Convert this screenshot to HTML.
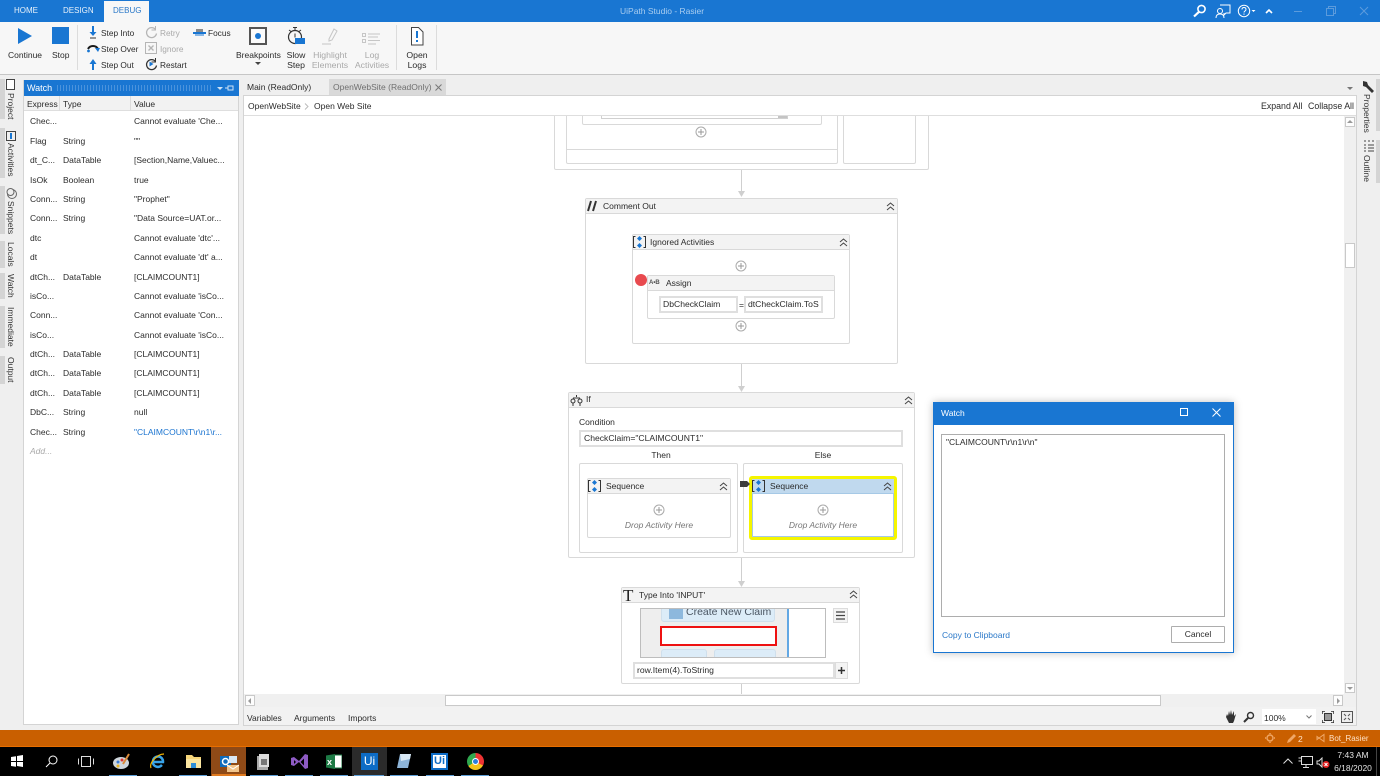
<!DOCTYPE html>
<html><head><meta charset="utf-8"><title>UiPath Studio - Rasier</title>
<style>
html,body{margin:0;padding:0}
body{width:1380px;height:776px;overflow:hidden;position:relative;background:#efefef;font-family:"Liberation Sans",sans-serif;font-size:8.5px;color:#2b2b2b;filter:blur(.3px)}
div,span,svg{position:absolute;box-sizing:border-box}
.t{white-space:nowrap;line-height:12px;height:12px}
.c{white-space:nowrap;line-height:10px;text-align:center}
.g{color:#a9a9a9}
.b{background:#fff;border:1px solid #d9d9d9;border-radius:2px}
.h{background:#f3f3f3;border-bottom:1px solid #d9d9d9;left:0;right:0;top:0}
.in{background:#fff;border:2px solid #dfdfdf;line-height:12px;padding-left:2px;white-space:nowrap;overflow:hidden;font-size:8.6px}
.v{writing-mode:vertical-rl;white-space:nowrap;line-height:12px;color:#333}
.strip{background:#d4d4d4}
.line{background:#cfcfcf;width:1px}
.r{font-size:8.3px}
</style></head><body>

<!-- title bar -->
<div style="left:0;top:0;width:1380px;height:22px;background:#1976d2"></div>
<div style="left:104px;top:1px;width:45px;height:22px;background:#f7f7f7"></div>
<div class="t" style="left:14px;top:5px;color:#e8f1fa;font-size:8px">HOME</div>
<div class="t" style="left:63px;top:5px;color:#e8f1fa;font-size:8px">DESIGN</div>
<div class="t" style="left:113px;top:5px;color:#2a78c8;font-size:8px">DEBUG</div>
<div class="t" style="left:620px;top:5px;color:#a9cdf0;font-size:8.5px">UiPath Studio - Rasier</div>
<svg style="left:1192px;top:3px" width="16" height="16" viewBox="0 0 16 16" fill="none" stroke="#fff" stroke-width="1.6"><circle cx="9.5" cy="6" r="3.6"/><path d="M7 8.8 2 13.5" stroke-width="2.2"/></svg>
<svg style="left:1215px;top:3px" width="16" height="16" viewBox="0 0 16 16" fill="none" stroke="#fff" stroke-width="1"><path d="M5 2h10v8h-4l-2 2v-2"/><circle cx="5" cy="8" r="2.5"/><path d="M1 15c0-3 2-4 4-4s4 1 4 4"/></svg>
<svg style="left:1236px;top:3px" width="22" height="16" viewBox="0 0 22 16" fill="none" stroke="#fff"><circle cx="8" cy="8" r="5.7"/><path d="M6 6.5c0-2.6 4-2.6 4 0 0 1.5-2 1.5-2 3M8 10.5v1.3"/><path d="M15.500 7h4l-2 2z" fill="#fff" stroke="none"/></svg>
<svg style="left:1264px;top:7px" width="10" height="8" viewBox="0 0 10 8" fill="none" stroke="#fff" stroke-width="1.6"><path d="M2 6l3-3 3 3"/></svg>
<div style="left:1294px;top:11px;width:8px;height:1px;background:#5c9bdc"></div>
<svg style="left:1326px;top:6px" width="10" height="10" viewBox="0 0 10 10" fill="none" stroke="#5c9bdc"><rect x=".5" y="2.500" width="7" height="7"/><path d="M2.500 2.500v-2h7v7h-2"/></svg>
<svg style="left:1359px;top:6px" width="10" height="10" viewBox="0 0 10 10" stroke="#5c9bdc"><path d="M1 1l8 8M9 1l-8 8"/></svg>

<!-- ribbon -->
<div style="left:0;top:22px;width:1380px;height:53px;background:#f7f7f7;border-bottom:1px solid #c6c6c6"></div>
<svg style="left:17px;top:27px" width="16" height="18"><path d="M1 1 15 9 1 17z" fill="#1976d2"/></svg>
<div style="left:52px;top:27px;width:17px;height:17px;background:#1976d2"></div>
<div class="t" style="left:8px;top:49px;font-size:8.5px">Continue</div>
<div class="t" style="left:52px;top:49px;font-size:8.5px">Stop</div>
<div style="left:77px;top:25px;width:1px;height:45px;background:#dcdcdc"></div>
<svg style="left:88px;top:26px" width="10" height="13"><path d="M5 0v8" stroke="#1976d2" stroke-width="2"/><path d="M1.500 6h7L5 10z" fill="#1976d2"/><path d="M2 12h6" stroke="#333"/></svg>
<svg style="left:86px;top:43px" width="14" height="10" fill="none"><path d="M2 6c2-4 8-4 10 0" stroke="#1a1a1a" stroke-width="2"/><path d="M9 5h5l-2 4z" fill="#1976d2"/><circle cx="2.500" cy="8" r="1.400" fill="#1976d2"/></svg>
<svg style="left:88px;top:58px" width="10" height="13"><path d="M5 4v8" stroke="#1976d2" stroke-width="2"/><path d="M1.500 6h7L5 1z" fill="#1976d2"/></svg>
<div class="t r" style="left:101px;top:27px">Step Into</div>
<div class="t r" style="left:101px;top:43px">Step Over</div>
<div class="t r" style="left:101px;top:59px">Step Out</div>
<svg style="left:145px;top:26px" width="13" height="13" fill="none" stroke="#b5b5b5" stroke-width="1.300"><path d="M10.500 3.500a5 5 0 1 0 1 4"/><path d="M10.500 0v4h-4" stroke-width="1"/></svg>
<svg style="left:145px;top:42px" width="13" height="13" fill="none" stroke="#b5b5b5"><rect x=".5" y=".5" width="11" height="11"/><path d="M3.500 3.500l5 5M8.500 3.500l-5 5" stroke-width="1.400"/></svg>
<svg style="left:145px;top:58px" width="13" height="13" fill="none" stroke="#333" stroke-width="1.300"><path d="M10.500 3.500a5 5 0 1 0 1 4"/><path d="M10.500 0v4h-4" stroke-width="1"/><path d="M4.500 3.500l4 2.500-4 2.500z" fill="#1976d2" stroke="none"/></svg>
<div class="t g r" style="left:160px;top:27px">Retry</div>
<div class="t g r" style="left:160px;top:43px">Ignore</div>
<div class="t r" style="left:160px;top:59px">Restart</div>
<svg style="left:193px;top:29px" width="13" height="7"><path d="M3 0h7v4H3z" fill="#8a8a8a"/><path d="M0 3h13v2H0z" fill="#1976d2"/><path d="M2 6h9" stroke="#1976d2"/></svg>
<div class="t r" style="left:208px;top:27px">Focus</div>
<div style="left:249px;top:27px;width:18px;height:18px;border:2px solid #555;background:#fbfbfb"></div>
<div style="left:255px;top:33px;width:6px;height:6px;border-radius:50%;background:#1976d2"></div>
<div class="t" style="left:236px;top:49px;font-size:8.5px">Breakpoints</div>
<svg style="left:255px;top:62px" width="6" height="4"><path d="M0 0h6L3 3z" fill="#444"/></svg>
<svg style="left:286px;top:26px" width="20" height="20" fill="none" stroke="#333"><circle cx="9" cy="11" r="6.500" stroke-width="1.200"/><path d="M7 1.500h4M9 1.500v3M3 4l2 1.500M15 4l-2 1.500M9 7.500v4" /><rect x="9" y="12" width="10" height="6" fill="#1976d2" stroke="none"/></svg>
<div class="c" style="left:280px;top:50px;width:32px;font-size:8.7px">Slow<br>Step</div>
<svg style="left:320px;top:27px" width="20" height="20" fill="none" stroke="#c6c6c6"><path d="M9 12 14 2l3 2-5 9-3 1zM2 17h9"/></svg>
<div class="c g" style="left:310px;top:50px;width:40px;font-size:8.7px">Highlight<br>Elements</div>
<svg style="left:362px;top:33px" width="20" height="14" fill="none" stroke="#c6c6c6"><rect x=".5" y=".5" width="3" height="3"/><rect x=".5" y="6.500" width="3" height="3"/><path d="M6 1h12M6 4h10M6 7.500h12M6 11h8"/></svg>
<div class="c g" style="left:352px;top:50px;width:40px;font-size:8.7px">Log<br>Activities</div>
<div style="left:396px;top:25px;width:1px;height:45px;background:#dcdcdc"></div>
<div style="left:436px;top:25px;width:1px;height:45px;background:#dcdcdc"></div>
<svg style="left:409px;top:27px" width="16" height="19" fill="#fff" stroke="#444"><path d="M2.500.5h7l4.500 4.500v13H2.500z"/><path d="M8 4v7M8 13v2" stroke="#1976d2" stroke-width="2"/></svg>
<div class="c" style="left:402px;top:50px;width:30px;font-size:8.7px">Open<br>Logs</div>

<!-- left rail -->
<div class="strip" style="left:0;top:79px;width:5px;height:40px"></div>
<div class="strip" style="left:0;top:128px;width:5px;height:50px"></div>
<div class="strip" style="left:0;top:186px;width:5px;height:48px"></div>
<div class="strip" style="left:0;top:241px;width:5px;height:27px"></div>
<div class="strip" style="left:0;top:273px;width:5px;height:26px"></div>
<div class="strip" style="left:0;top:306px;width:5px;height:42px"></div>
<div class="strip" style="left:0;top:356px;width:5px;height:28px"></div>
<svg style="left:6px;top:79px" width="10" height="12" fill="#fff" stroke="#444"><rect x=".5" y=".5" width="8" height="10"/></svg>
<div class="v" style="left:5px;top:93px;width:12px">Project</div>
<svg style="left:6px;top:129px" width="11" height="13" fill="none" stroke="#444"><rect x=".5" y="2.500" width="9" height="9"/><path d="M5 4v6" stroke="#1976d2" stroke-width="2"/></svg>
<div class="v" style="left:5px;top:143px;width:12px">Activities</div>
<svg style="left:6px;top:187px" width="12" height="13" fill="#eee" stroke="#666"><circle cx="6" cy="7" r="4.500"/><circle cx="4.500" cy="5" r="3.500"/></svg>
<div class="v" style="left:5px;top:201px;width:12px">Snippets</div>
<div class="v" style="left:5px;top:242px;width:12px">Locals</div>
<div class="v" style="left:5px;top:274px;width:12px">Watch</div>
<div class="v" style="left:5px;top:307px;width:12px">Immediate</div>
<div class="v" style="left:5px;top:357px;width:12px">Output</div>

<!-- watch panel -->
<div style="left:23px;top:80px;width:216px;height:645px;background:#fff;border:1px solid #d4d4d4"></div>
<div style="left:24px;top:80px;width:215px;height:16px;background:#1976d2"></div>
<div style="left:57px;top:85px;width:155px;height:6px;background:repeating-linear-gradient(90deg,#4b93dc 0 1px,#1976d2 1px 3px)"></div>
<div class="t" style="left:27px;top:82px;color:#fff;font-size:9px">Watch</div>
<svg style="left:216px;top:85px" width="20" height="7"><path d="M1 2h6L4 5z" fill="#cfe2f5"/><path d="M12 1h5v4h-5zM9 3h3" fill="none" stroke="#cfe2f5"/></svg>
<div style="left:24px;top:96px;width:214px;height:15px;background:#f2f2f2;border-bottom:1px solid #dedede"></div>
<div style="left:59px;top:96px;width:1px;height:15px;background:#dcdcdc"></div>
<div style="left:130px;top:96px;width:1px;height:15px;background:#dcdcdc"></div>
<div class="t" style="left:27px;top:98px">Express</div>
<div class="t" style="left:63px;top:98px">Type</div>
<div class="t" style="left:134px;top:98px">Value</div>
<div class="t" style="left:30px;top:115px">Chec...</div><div class="t" style="left:134px;top:115px">Cannot evaluate 'Che...</div>
<div class="t" style="left:30px;top:135px">Flag</div><div class="t" style="left:63px;top:135px">String</div><div class="t" style="left:134px;top:135px">""</div>
<div class="t" style="left:30px;top:154px">dt_C...</div><div class="t" style="left:63px;top:154px">DataTable</div><div class="t" style="left:134px;top:154px">[Section,Name,Valuec...</div>
<div class="t" style="left:30px;top:174px">IsOk</div><div class="t" style="left:63px;top:174px">Boolean</div><div class="t" style="left:134px;top:174px">true</div>
<div class="t" style="left:30px;top:193px">Conn...</div><div class="t" style="left:63px;top:193px">String</div><div class="t" style="left:134px;top:193px">"Prophet"</div>
<div class="t" style="left:30px;top:212px">Conn...</div><div class="t" style="left:63px;top:212px">String</div><div class="t" style="left:134px;top:212px">"Data Source=UAT.or...</div>
<div class="t" style="left:30px;top:232px">dtc</div><div class="t" style="left:134px;top:232px">Cannot evaluate 'dtc'...</div>
<div class="t" style="left:30px;top:251px">dt</div><div class="t" style="left:134px;top:251px">Cannot evaluate 'dt' a...</div>
<div class="t" style="left:30px;top:271px">dtCh...</div><div class="t" style="left:63px;top:271px">DataTable</div><div class="t" style="left:134px;top:271px">[CLAIMCOUNT1]</div>
<div class="t" style="left:30px;top:290px">isCo...</div><div class="t" style="left:134px;top:290px">Cannot evaluate 'isCo...</div>
<div class="t" style="left:30px;top:309px">Conn...</div><div class="t" style="left:134px;top:309px">Cannot evaluate 'Con...</div>
<div class="t" style="left:30px;top:329px">isCo...</div><div class="t" style="left:134px;top:329px">Cannot evaluate 'isCo...</div>
<div class="t" style="left:30px;top:348px">dtCh...</div><div class="t" style="left:63px;top:348px">DataTable</div><div class="t" style="left:134px;top:348px">[CLAIMCOUNT1]</div>
<div class="t" style="left:30px;top:367px">dtCh...</div><div class="t" style="left:63px;top:367px">DataTable</div><div class="t" style="left:134px;top:367px">[CLAIMCOUNT1]</div>
<div class="t" style="left:30px;top:387px">dtCh...</div><div class="t" style="left:63px;top:387px">DataTable</div><div class="t" style="left:134px;top:387px">[CLAIMCOUNT1]</div>
<div class="t" style="left:30px;top:406px">DbC...</div><div class="t" style="left:63px;top:406px">String</div><div class="t" style="left:134px;top:406px">null</div>
<div class="t" style="left:30px;top:426px">Chec...</div><div class="t" style="left:63px;top:426px">String</div><div class="t" style="left:134px;top:426px;color:#1b74d0">"CLAIMCOUNT\r\n1\r...</div>
<div class="t g" style="left:30px;top:445px;font-style:italic">Add...</div>

<!-- document tabs -->
<div class="t" style="left:247px;top:81px">Main (ReadOnly)</div>
<div style="left:329px;top:79px;width:117px;height:16px;background:#d9d9d9"></div>
<div class="t" style="left:333px;top:81px;color:#6f6f6f">OpenWebSite (ReadOnly)</div>
<svg style="left:435px;top:84px" width="7" height="7" stroke="#777"><path d="M.5.5l6 6M6.500.5l-6 6"/></svg>
<svg style="left:1347px;top:87px" width="6" height="4"><path d="M0 0h6L3 3z" fill="#777"/></svg>

<!-- designer -->
<div style="left:243px;top:95px;width:1114px;height:631px;background:#fff;border:1px solid #d4d4d4;border-top:2px solid #d4d4d4"></div>

<!-- scrollbars -->
<div style="left:1344px;top:116px;width:12px;height:578px;background:#f0f0f0"></div>
<div style="left:1345px;top:117px;width:10px;height:10px;background:#fdfdfd;border:1px solid #c9c9c9"></div>
<svg style="left:1347px;top:120px" width="6" height="4"><path d="M3 0l3 3H0z" fill="#999"/></svg>
<div style="left:1345px;top:243px;width:10px;height:25px;background:#fff;border:1px solid #c9c9c9"></div>
<div style="left:1345px;top:683px;width:10px;height:10px;background:#fdfdfd;border:1px solid #c9c9c9"></div>
<svg style="left:1347px;top:687px" width="6" height="4"><path d="M0 0h6L3 3z" fill="#999"/></svg>
<div style="left:244px;top:694px;width:1112px;height:13px;background:#f0f0f0"></div>
<div style="left:245px;top:695px;width:10px;height:11px;background:#fdfdfd;border:1px solid #c9c9c9"></div>
<svg style="left:248px;top:698px" width="4" height="6"><path d="M0 3l3-3v6z" fill="#999"/></svg>
<div style="left:445px;top:695px;width:716px;height:11px;background:#fff;border:1px solid #c9c9c9"></div>
<div style="left:1333px;top:695px;width:10px;height:11px;background:#fdfdfd;border:1px solid #c9c9c9"></div>
<svg style="left:1337px;top:698px" width="4" height="6"><path d="M3 3L0 0v6z" fill="#999"/></svg>
<div style="left:244px;top:707px;width:1112px;height:18px;background:#f2f2f2"></div>
<div class="t" style="left:247px;top:712px">Variables</div>
<div class="t" style="left:294px;top:712px">Arguments</div>
<div class="t" style="left:348px;top:712px">Imports</div>
<svg style="left:1224px;top:710px" width="14" height="14"><path d="M2 7l1-3 1 2 1-5 1 4 1-5 1 5 2-4v5l2-2-2 7-1 2H5z" fill="#333"/></svg>
<svg style="left:1243px;top:711px" width="12" height="12" fill="none" stroke="#333" stroke-width="1.400"><circle cx="7.500" cy="4.500" r="3"/><path d="M5 7l-4 4" stroke-width="2"/></svg>
<div style="left:1262px;top:709px;width:54px;height:15px;background:#fff"></div>
<div class="t" style="left:1264px;top:712px">100%</div>
<svg style="left:1306px;top:715px" width="6" height="4" fill="none" stroke="#777"><path d="M.5.5l2.500 2.500L5.500.5"/></svg>
<svg style="left:1322px;top:711px" width="12" height="12" fill="none" stroke="#333"><rect x="2.500" y="2.500" width="7" height="7" fill="#999"/><path d="M0 3V0h3M9 0h3v3M12 9v3H9M3 12H0V9" stroke-width="1.500"/></svg>
<svg style="left:1341px;top:711px" width="12" height="12" fill="#eee" stroke="#555"><rect x=".5" y=".5" width="11" height="11"/><path d="M3 3l2 2M9 3L7 5M3 9l2-2M9 9L7 7"/></svg>

<!-- right rail -->
<div class="strip" style="left:1376px;top:79px;width:4px;height:52px"></div>
<div class="strip" style="left:1376px;top:140px;width:4px;height:43px"></div>
<svg style="left:1362px;top:79px" width="14" height="14"><path d="M1 2l4 1 1 3 6 6-2 2-6-6-3-1z" fill="#333"/></svg>
<div class="v" style="left:1361px;top:94px;width:12px">Properties</div>
<svg style="left:1363px;top:140px" width="11" height="13" stroke="#444"><path d="M1 1h2M5 1h2M9 1h2M1 5h2M5 5h6M1 8h2M5 8h6M1 11h2M5 11h6"/></svg>
<div class="v" style="left:1361px;top:155px;width:12px">Outline</div>

<!-- flow: top block -->
<div class="b" style="left:554px;top:104px;width:375px;height:66px;border-top:none"></div>
<div class="b" style="left:566px;top:104px;width:272px;height:60px;border-top:none"></div>
<div style="left:566px;top:149px;width:272px;height:1px;background:#d9d9d9"></div>
<div class="b" style="left:843px;top:104px;width:73px;height:60px;border-top:none"></div>
<div class="b" style="left:582px;top:104px;width:240px;height:21px;border-top:none"></div>
<div style="left:601px;top:104px;width:187px;height:15px;background:#fff;border:1px solid #d0d0d0;border-top:none"></div>
<div style="left:778px;top:114px;width:9px;height:4px;background:#c4c4c4"></div>
<div style="left:244px;top:96px;width:1112px;height:19px;background:#fff"></div>
<div style="left:244px;top:115px;width:1112px;height:1px;background:#dedede"></div>
<div class="t" style="left:248px;top:100px">OpenWebSite</div>
<svg style="left:304px;top:103px" width="5" height="7" fill="none" stroke="#bbb"><path d="M1 .5l3 3-3 3"/></svg>
<div class="t" style="left:314px;top:100px">Open Web Site</div>
<div class="t" style="left:1261px;top:100px;font-size:8.8px">Expand All</div>
<div class="t" style="left:1308px;top:100px;font-size:8.8px">Collapse All</div>
<svg style="left:695px;top:126px" width="12" height="12" fill="none" stroke="#aaa"><circle cx="6" cy="6" r="5"/><path d="M6 3v6M3 6h6" stroke="#999"/></svg>

<!-- connectors -->
<div class="line" style="left:741px;top:170px;height:22px"></div>
<svg style="left:737px;top:190px" width="9" height="8"><path d="M1 1h7L4.500 7z" fill="#cfcfcf"/></svg>
<div class="line" style="left:741px;top:363px;height:24px"></div>
<svg style="left:737px;top:385px" width="9" height="8"><path d="M1 1h7L4.500 7z" fill="#cfcfcf"/></svg>
<div class="line" style="left:741px;top:557px;height:25px"></div>
<svg style="left:737px;top:580px" width="9" height="8"><path d="M1 1h7L4.500 7z" fill="#cfcfcf"/></svg>
<div class="line" style="left:741px;top:683px;height:11px"></div>

<!-- comment out -->
<div class="b" style="left:585px;top:198px;width:313px;height:166px"><div class="h" style="height:15px"></div></div>
<svg style="left:586px;top:200px" width="12" height="12" stroke="#333" stroke-width="2"><path d="M5 1 2 11M10 1 7 11"/></svg>
<div class="t" style="left:603px;top:200px">Comment Out</div>
<svg style="left:886px;top:202px" width="9" height="9" fill="none" stroke="#444"><path d="M1 4l3.500-3L8 4M1 8l3.500-3L8 8"/></svg>

<div class="b" style="left:632px;top:234px;width:218px;height:110px"><div class="h" style="height:15px"></div></div>
<svg style="left:633px;top:236px" width="13" height="12"><path d="M2.500.5H.5v11h2M10.500.5h2v11h-2" fill="none" stroke="#333"/><path d="M6.500 0l2.500 2.500-2.500 2.500L4 2.500zM6.500 7l2.500 2.500L6.500 12 4 9.500z" fill="#1976d2"/></svg>
<div class="t" style="left:650px;top:236px">Ignored Activities</div>
<svg style="left:839px;top:238px" width="9" height="9" fill="none" stroke="#444"><path d="M1 4l3.500-3L8 4M1 8l3.500-3L8 8"/></svg>
<svg style="left:735px;top:260px" width="12" height="12" fill="none" stroke="#aaa"><circle cx="6" cy="6" r="5"/><path d="M6 3v6M3 6h6" stroke="#999"/></svg>
<div class="b" style="left:647px;top:275px;width:188px;height:44px"><div class="h" style="height:15px"></div></div>
<div style="left:635px;top:274px;width:12px;height:12px;border-radius:50%;background:#e84a4f"></div>
<div class="t" style="left:649px;top:277px;font-size:6px;font-weight:bold;color:#555">A•B</div>
<div class="t" style="left:666px;top:277px">Assign</div>
<div class="in" style="left:659px;top:296px;width:79px;height:17px">DbCheckClaim</div>
<div class="t" style="left:739px;top:299px">=</div>
<div class="in" style="left:744px;top:296px;width:79px;height:17px">dtCheckClaim.ToS</div>
<svg style="left:735px;top:320px" width="12" height="12" fill="none" stroke="#aaa"><circle cx="6" cy="6" r="5"/><path d="M6 3v6M3 6h6" stroke="#999"/></svg>

<!-- if -->
<div class="b" style="left:568px;top:392px;width:347px;height:166px"><div class="h" style="height:15px"></div></div>
<svg style="left:570px;top:394px" width="13" height="12" fill="none" stroke="#333"><path d="M6.500 1v2M3 4h7"/><circle cx="3" cy="7" r="2"/><circle cx="10" cy="7" r="2"/><path d="M3 9v3M10 9v3"/></svg>
<div class="t" style="left:586px;top:393px">If</div>
<svg style="left:904px;top:396px" width="9" height="9" fill="none" stroke="#444"><path d="M1 4l3.500-3L8 4M1 8l3.500-3L8 8"/></svg>
<div class="t" style="left:579px;top:416px">Condition</div>
<div class="in" style="left:579px;top:430px;width:324px;height:17px;padding-left:3px">CheckClaim="CLAIMCOUNT1"</div>
<div class="c" style="left:629px;top:450px;width:64px">Then</div>
<div class="c" style="left:791px;top:450px;width:64px">Else</div>
<div class="b" style="left:579px;top:463px;width:159px;height:90px"></div>
<div class="b" style="left:743px;top:463px;width:160px;height:90px"></div>
<div class="b" style="left:587px;top:478px;width:144px;height:60px"><div class="h" style="height:15px"></div></div>
<svg style="left:588px;top:480px" width="13" height="12"><path d="M2.500.5H.5v11h2M10.500.5h2v11h-2" fill="none" stroke="#333"/><path d="M6.500 0l2.500 2.500-2.500 2.500L4 2.500zM6.500 7l2.500 2.500L6.500 12 4 9.500z" fill="#1976d2"/></svg>
<div class="t" style="left:606px;top:480px">Sequence</div>
<svg style="left:719px;top:482px" width="9" height="9" fill="none" stroke="#444"><path d="M1 4l3.500-3L8 4M1 8l3.500-3L8 8"/></svg>
<svg style="left:653px;top:504px" width="12" height="12" fill="none" stroke="#aaa"><circle cx="6" cy="6" r="5"/><path d="M6 3v6M3 6h6" stroke="#999"/></svg>
<div class="c" style="left:609px;top:520px;width:100px;font-style:italic;color:#777">Drop Activity Here</div>

<div style="left:749px;top:476px;width:148px;height:64px;border:3px solid #f5f500;border-radius:3px;background:#fff"></div>
<div style="left:752px;top:479px;width:142px;height:58px;border:1px solid #a6c9e6"></div>
<div style="left:752px;top:479px;width:142px;height:15px;background:#c0d9ee;border-bottom:1px solid #a6c9e6"></div>
<svg style="left:740px;top:480px" width="11" height="8"><path d="M0 1h7l3 3-3 3H0z" fill="#3d3d3d"/></svg>
<svg style="left:752px;top:480px" width="13" height="12"><path d="M2.500.5H.5v11h2M10.500.5h2v11h-2" fill="none" stroke="#333"/><path d="M6.500 0l2.500 2.500-2.500 2.500L4 2.500zM6.500 7l2.500 2.500L6.500 12 4 9.500z" fill="#1976d2"/></svg>
<div class="t" style="left:770px;top:480px">Sequence</div>
<svg style="left:883px;top:482px" width="9" height="9" fill="none" stroke="#444"><path d="M1 4l3.500-3L8 4M1 8l3.500-3L8 8"/></svg>
<svg style="left:817px;top:504px" width="12" height="12" fill="none" stroke="#aaa"><circle cx="6" cy="6" r="5"/><path d="M6 3v6M3 6h6" stroke="#999"/></svg>
<div class="c" style="left:773px;top:520px;width:100px;font-style:italic;color:#777">Drop Activity Here</div>

<!-- type into -->
<div class="b" style="left:621px;top:587px;width:239px;height:97px"><div class="h" style="height:15px"></div></div>
<div style="left:623px;top:587px;height:16px;width:14px;font:17px/17px 'Liberation Serif',serif;color:#222">T</div>
<div class="t" style="left:639px;top:589px">Type Into 'INPUT'</div>
<svg style="left:849px;top:590px" width="9" height="9" fill="none" stroke="#444"><path d="M1 4l3.500-3L8 4M1 8l3.500-3L8 8"/></svg>
<div style="left:640px;top:608px;width:186px;height:50px;background:#fff;border:1px solid #bdbdbd;overflow:hidden">
  <div style="left:0;top:0;width:147px;height:48px;background:#eeeeee"></div>
  <div style="left:146px;top:0;width:2px;height:48px;background:#63a8e4"></div>
  <div style="left:20px;top:-6px;width:114px;height:19px;background:#dcecf8;border:1px solid #cfdfec;border-radius:3px"></div>
  <div style="left:28px;top:-1px;width:14px;height:11px;background:#8db8dd"></div>
  <div class="t" style="left:45px;top:-3px;font-size:10.500px;color:#4a5562">Create New Claim</div>
  <div style="left:19px;top:17px;width:117px;height:20px;background:#fff;border:2px solid #ee1111"></div>
  <div style="left:20px;top:40px;width:46px;height:14px;background:#dcecf8;border:1px solid #cfdfec;border-radius:3px"></div>
  <div style="left:73px;top:40px;width:62px;height:14px;background:#dcecf8;border:1px solid #cfdfec;border-radius:3px"></div>
</div>
<div style="left:833px;top:608px;width:15px;height:15px;background:#f4f4f4;border:1px solid #dcdcdc"></div>
<svg style="left:836px;top:611px" width="9" height="9" stroke="#444" stroke-width="1.200"><path d="M0 1h9M0 4.500h9M0 8h9"/></svg>
<div class="in" style="left:633px;top:662px;width:202px;height:17px">row.Item(4).ToString</div>
<div style="left:835px;top:662px;width:13px;height:17px;background:#f4f4f4;border:1px solid #dcdcdc"></div>
<svg style="left:838px;top:667px" width="7" height="7" stroke="#333" stroke-width="1.500"><path d="M3.500 0v7M0 3.500h7"/></svg>

<!-- watch dialog -->
<div style="left:933px;top:402px;width:301px;height:251px;background:#fff;border:1px solid #1976d2;box-shadow:0 0 8px rgba(0,0,0,.25)"></div>
<div style="left:933px;top:402px;width:301px;height:23px;background:#1976d2"></div>
<div class="t" style="left:941px;top:407px;color:#fff">Watch</div>
<div style="left:1180px;top:408px;width:8px;height:8px;border:1px solid #fff"></div>
<svg style="left:1212px;top:408px" width="9" height="9" stroke="#fff"><path d="M.5.5l8 8M8.500.5l-8 8"/></svg>
<div style="left:941px;top:434px;width:284px;height:183px;background:#fff;border:1px solid #adadad"></div>
<div class="t" style="left:946px;top:436px">"CLAIMCOUNT\r\n1\r\n"</div>
<div class="t" style="left:942px;top:629px;color:#2a78c8">Copy to Clipboard</div>
<div style="left:1171px;top:626px;width:54px;height:17px;background:#fff;border:1px solid #adadad;border-radius:1px;text-align:center;line-height:15px">Cancel</div>

<!-- status bar -->
<div style="left:0;top:730px;width:1380px;height:17px;background:#c95f00;border-bottom:1px solid #e86e00"></div>
<svg style="left:1265px;top:733px" width="10" height="10" fill="none" stroke="#f0a766" stroke-width="1.400"><circle cx="5" cy="5" r="3"/><path d="M5 0v1M5 9v1M0 5h1M9 5h1"/></svg>
<svg style="left:1286px;top:733px" width="11" height="11"><path d="M1 10l1-3 6-6 2 2-6 6z" fill="#f0a766"/></svg>
<div class="t" style="left:1298px;top:733px;color:#ffe1c4">2</div>
<svg style="left:1316px;top:733px" width="10" height="10" fill="none" stroke="#f0a766"><path d="M1 3.500l7 5V1.500l-7 5zM1 3v4"/></svg>
<div class="t" style="left:1329px;top:733px;color:#ffe1c4;font-size:8px">Bot_Rasier</div>

<!-- taskbar -->
<div style="left:0;top:747px;width:1380px;height:29px;background:#000"></div>
<div style="left:211px;top:747px;width:35px;height:29px;background:#8f4a17"></div>
<div style="left:212px;top:774px;width:34px;height:2px;background:#e07a1f"></div>
<div style="left:352px;top:747px;width:35px;height:29px;background:#2b2b2b"></div>
<div style="left:109px;top:775px;width:28px;height:1px;background:#5fa0d8"></div>
<div style="left:179px;top:775px;width:28px;height:1px;background:#5fa0d8"></div>
<div style="left:250px;top:775px;width:28px;height:1px;background:#5fa0d8"></div>
<div style="left:285px;top:775px;width:28px;height:1px;background:#5fa0d8"></div>
<div style="left:320px;top:775px;width:28px;height:1px;background:#5fa0d8"></div>
<div style="left:354px;top:775px;width:30px;height:1px;background:#5fa0d8"></div>
<div style="left:390px;top:775px;width:28px;height:1px;background:#5fa0d8"></div>
<div style="left:426px;top:775px;width:28px;height:1px;background:#5fa0d8"></div>
<div style="left:461px;top:775px;width:28px;height:1px;background:#5fa0d8"></div>
<svg style="left:11px;top:755px" width="12" height="12" fill="#fff"><path d="M0 2l5-.8V6H0zM6 1l6-1v6H6zM0 7h5v4.800L0 11zM6 7h6v5l-6-1z"/></svg>
<svg style="left:45px;top:755px" width="13" height="13" fill="none" stroke="#fff"><circle cx="8" cy="5" r="4"/><path d="M5 8l-4 4"/></svg>
<svg style="left:78px;top:756px" width="16" height="12" fill="none" stroke="#ddd"><rect x="3.500" y=".5" width="9" height="10"/><path d="M.5 2.500v6M15.500 2.500v6"/></svg>
<svg style="left:113px;top:753px" width="18" height="17"><ellipse cx="8" cy="10" rx="8" ry="6" fill="#cfd6dc"/><circle cx="5" cy="9" r="1.500" fill="#3a7bd5"/><circle cx="9" cy="7" r="1.500" fill="#d33"/><circle cx="5" cy="13" r="1.500" fill="#e8b420"/><path d="M10 11 16 1" stroke="#d98a3a" stroke-width="2"/></svg>
<svg style="left:149px;top:752px" width="18" height="18" fill="none"><path d="M4 10h10a5 5 0 0 0-10-1c-1 5 5 8 9 4" stroke="#38a3e8" stroke-width="2.500"/><path d="M2 16C0 11 8 2 15 2" stroke="#f4b400" stroke-width="1.200"/></svg>
<svg style="left:185px;top:754px" width="17" height="15"><path d="M1 1h6l2 2h7v11H1z" fill="#f6d67a"/><path d="M1 5h15v9H1z" fill="#fbe5a0"/><path d="M6 9h5v5H6z" fill="#2f8fd8"/></svg>
<svg style="left:219px;top:753px" width="20" height="19"><rect x="1" y="3" width="11" height="11" fill="#0f6cbd"/><circle cx="6.500" cy="8.500" r="3" fill="none" stroke="#fff" stroke-width="1.500"/><rect x="10" y="3" width="8" height="7" fill="#d9e8f5"/><path d="M8 12h12v7H8z" fill="#f2c48a"/><path d="M8 12l6 4 6-4" fill="none" stroke="#fff"/></svg>
<svg style="left:256px;top:753px" width="14" height="18"><path d="M1 3h11v14H1z" fill="#a9a9a9"/><path d="M3 1h10v13H3z" fill="#dcdcdc"/><rect x="5" y="6" width="6" height="6" fill="#777"/></svg>
<svg style="left:290px;top:753px" width="18" height="17"><path d="M1 5l3-1 5 4 6-7 3 1v13l-3 1-6-7-5 4-3-1zM4 7v4l2-2zM14 5.500 10.500 9l3.500 3.500z" fill="#8e5bc4" fill-rule="evenodd"/></svg>
<svg style="left:326px;top:754px" width="16" height="15"><rect x="7" y="1" width="9" height="13" fill="#fff" stroke="#1d7a45"/><path d="M0 1.500 9 0v15l-9-1.500z" fill="#1d7a45"/></svg>
<div class="t" style="left:327px;top:756px;width:8px;color:#fff;font-size:9px;font-weight:bold">x</div>
<div style="left:361px;top:753px;width:17px;height:17px;background:#0d6cc6;color:#fff;font-size:12px;line-height:17px;text-align:center">Ui</div>
<svg style="left:396px;top:753px" width="16" height="17"><path d="M4 1h11l-3 14H1z" fill="#8db4d8"/><path d="M4 1h11l-1 5-9 2z" fill="#d8e8f4"/></svg>
<div style="left:431px;top:753px;width:17px;height:17px;background:#fff;border:2px solid #0d6cc6;color:#0d6cc6;font-size:11px;font-weight:bold;line-height:13px;text-align:center">Ui</div>
<div style="left:467px;top:753px;width:17px;height:17px;border-radius:50%;background:conic-gradient(#e33 0 33%,#f6c21c 33% 66%,#2fa84f 66%)"></div>
<div style="left:472px;top:758px;width:7px;height:7px;border-radius:50%;background:#2a7de1;border:1px solid #fff"></div>
<svg style="left:1283px;top:758px" width="10" height="6" fill="none" stroke="#ddd"><path d="M.5 5.500l4.500-4.500 4.500 4.500"/></svg>
<svg style="left:1298px;top:756px" width="15" height="13" fill="none" stroke="#ddd"><path d="M3.500.5h11v8h-11zM8 8.500v3M5 11.500h6M.5 2h3M.5 5h3"/></svg>
<svg style="left:1316px;top:757px" width="16" height="12"><path d="M1 4h2l3-3v9L3 7H1z" fill="none" stroke="#ddd"/><circle cx="10" cy="7.500" r="3.500" fill="#e01f1f"/><path d="M8.500 6l3 3M11.500 6l-3 3" stroke="#fff"/></svg>
<div class="c" style="left:1331px;top:749px;width:44px;color:#e2e2e2;line-height:13px;font-size:8.5px">7:43 AM<br>6/18/2020</div>
<div style="left:1376px;top:747px;width:1px;height:29px;background:#444"></div>
</body></html>
